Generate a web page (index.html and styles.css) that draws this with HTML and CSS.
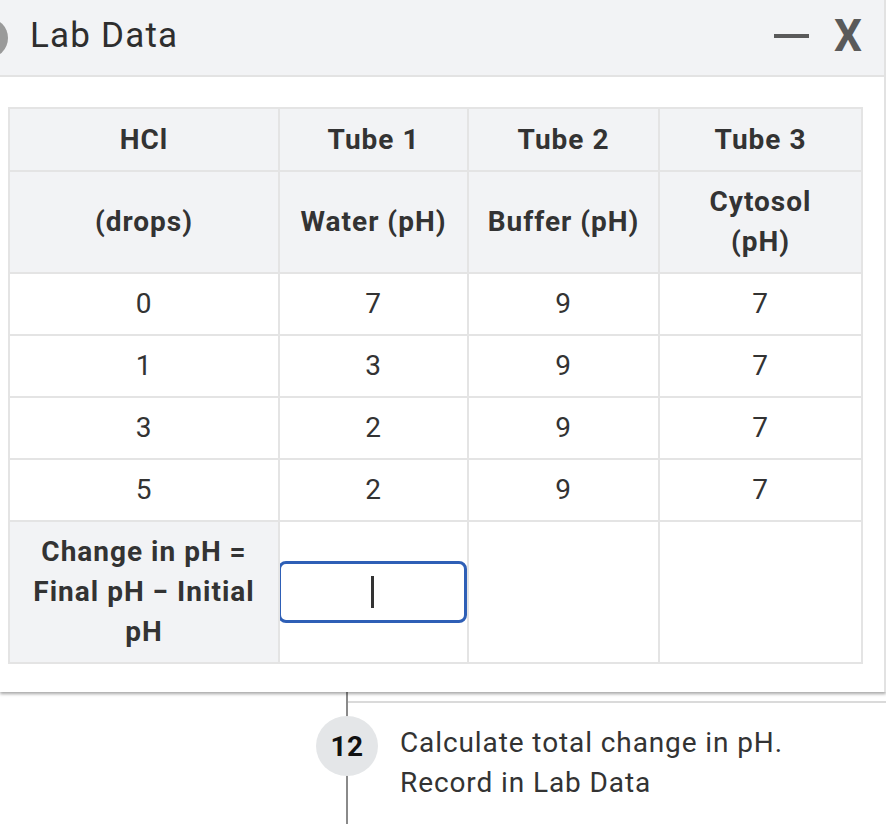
FILE: index.html
```html
<!DOCTYPE html>
<html lang="en">
<head>
<meta charset="utf-8">
<title>Lab Data</title>
<link rel="stylesheet" href="styles.css">
</head>
<body>
<div class="window">
  <div class="titlebar">
    <span class="dot"></span>
    <span class="title">Lab Data</span>
    <span class="controls"><span class="minimize"></span><span class="close">X</span></span>
  </div>
  <div class="body">
    <table class="lab">
      <colgroup>
        <col class="c1"><col class="c2"><col class="c3"><col class="c4">
      </colgroup>
      <tr class="head h1">
        <th>HCl</th><th>Tube 1</th><th>Tube 2</th><th>Tube 3</th>
      </tr>
      <tr class="head h2">
        <th>(drops)</th><th>Water (pH)</th><th>Buffer (pH)</th><th>Cytosol<br>(pH)</th>
      </tr>
      <tr class="data"><td>0</td><td>7</td><td>9</td><td>7</td></tr>
      <tr class="data"><td>1</td><td>3</td><td>9</td><td>7</td></tr>
      <tr class="data"><td>3</td><td>2</td><td>9</td><td>7</td></tr>
      <tr class="data"><td>5</td><td>2</td><td>9</td><td>7</td></tr>
      <tr class="change">
        <th>Change in pH =<br>Final pH &minus; Initial<br>pH</th>
        <td class="inputcell"><div class="field"><span class="caret"></span></div></td>
        <td></td>
        <td></td>
      </tr>
    </table>
  </div>
</div>
<div class="lower">
  <div class="divider"></div>
  <div class="step">
    <div class="badge">12</div>
    <div class="steptext">Calculate total change in pH.<br>Record in Lab Data</div>
  </div>
</div>
</body>
</html>
```
FILE: styles.css
```css
html, body {
  margin: 0;
  padding: 0;
  background: #ffffff;
  font-family: Roboto, "Liberation Sans", sans-serif;
  color: #333333;
  overflow: hidden;
}

.window {
  background: #ffffff;
  width: 884px;
  border-right: 2px solid #e2e2e2;
  box-shadow: 0 2px 3px rgba(0, 0, 0, 0.35);
  position: relative;
  z-index: 1;
}

.titlebar {
  height: 75px;
  background: #f2f3f5;
  border-bottom: 2px solid #e3e3e3;
  display: flex;
  align-items: center;
  overflow: hidden;
}

.dot {
  flex: none;
  width: 40px;
  height: 40px;
  border-radius: 50%;
  background: #9a9a9a;
  margin-left: -32px;
}

.title {
  margin-left: 22px;
  font-size: 35px;
  letter-spacing: 1.2px;
  color: #2e2e2e;
  margin-top: -4px;
}

.controls {
  margin-left: auto;
  margin-right: 22px;
  display: flex;
  align-items: center;
  gap: 25px;
}

.minimize {
  display: block;
  width: 35px;
  height: 4px;
  background: #5a5a5a;
  margin-top: -4px;
}

.close {
  font-size: 44px;
  font-weight: 700;
  color: #5a5a5a;
  line-height: 1;
  margin-top: -4px;
}

.body {
  padding: 30px 0 28px 8px;
}

.lab {
  border-collapse: collapse;
  width: 853px;
  table-layout: fixed;
  font-size: 28px;
  letter-spacing: 1px;
}

.c1 { width: 270px; }
.c2 { width: 189px; }
.c3 { width: 191px; }
.c4 { width: 203px; }

.lab th, .lab td {
  border: 2px solid #e4e4e4;
  text-align: center;
  vertical-align: middle;
  padding: 0;
  line-height: 40px;
}

.lab th {
  font-weight: 700;
  color: #333333;
}

.head th { background: #f2f3f5; }
.h1 { height: 63px; }
.h2 { height: 102px; }
.data { height: 62px; }
.data td { color: #333333; }
.change { height: 142px; }
.change th { background: #f2f3f5; }

.inputcell { padding: 0; }

.field {
  box-sizing: border-box;
  height: 62px;
  width: 189px;
  margin-left: -2px;
  border: 3px solid #2e5fb6;
  border-radius: 8px;
  background: #ffffff;
  display: flex;
  align-items: center;
  justify-content: center;
}

.caret {
  display: block;
  width: 3px;
  height: 32px;
  background: #333333;
}

.lower {
  height: 140px;
  background: linear-gradient(to right, transparent 346px, #8a8a8a 346px, #8a8a8a 348px, transparent 348px);
  padding-top: 9px;
}

.divider {
  margin-left: 348px;
  height: 2px;
  background: #dadada;
}

.step {
  display: flex;
  align-items: flex-start;
  margin-top: 11px;
  padding-left: 316px;
}

.badge {
  flex: none;
  width: 62px;
  height: 60px;
  border-radius: 50%;
  background: #e4e6e8;
  display: flex;
  align-items: center;
  justify-content: center;
  font-size: 28px;
  font-weight: 700;
  letter-spacing: 0.5px;
  color: #111111;
  margin-top: 2px;
}

.steptext {
  margin-left: 22px;
  font-size: 28px;
  line-height: 40px;
  color: #333333;
  letter-spacing: 0.9px;
  margin-top: 9px;
}
```
